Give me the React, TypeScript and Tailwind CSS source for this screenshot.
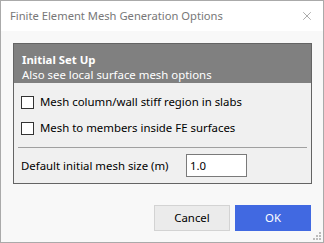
import { X } from 'lucide-react';

function CheckRow({ label }: { label: string }) {
  return (
    <label className="flex items-center h-[26px] pl-[7px]">
      <span className="w-[13px] h-[13px] border border-[#333333] bg-white shrink-0" />
      <span className="ml-[6px] text-[11.4px] text-black leading-none">{label}</span>
    </label>
  );
}

export default function App() {
  return (
    <div
      className="relative w-[324px] h-[243px] border border-[#aaaaaa] bg-[#f8f8f8] flex flex-col overflow-hidden"
      style={{ fontFamily: '"Noto Sans", "Open Sans", sans-serif' }}
    >
      <div className="h-[30px] bg-white flex items-center justify-between pl-[9px] pr-[9px] shrink-0">
        <span className="text-[11.2px] text-[#777777]">Finite Element Mesh Generation Options</span>
        <X className="w-[14px] h-[14px] text-[#888888]" strokeWidth={1.2} />
      </div>

      <div className="flex-1 flex flex-col px-[12px] pt-[12px]">
        <div className="w-[299px] border border-[#646464] bg-[#f0f0f0] flex flex-col">
          <div className="bg-[#808080] h-[39px] px-[8px] pt-[8px] text-white text-[11.4px] leading-[15px]">
            <div className="font-bold">Initial Set Up</div>
            <div>Also see local surface mesh options</div>
          </div>
          <div className="pt-[6px]">
            <CheckRow label="Mesh column/wall stiff region in slabs" />
            <CheckRow label="Mesh to members inside FE surfaces" />
          </div>
          <div className="mx-[4px] mt-[6px] h-px bg-[#a0a0a0]" />
          <div className="flex items-center h-[35px] pl-[7px]">
            <span className="text-[11.4px] text-black w-[165px]">Default initial mesh size (m)</span>
            <div className="w-[61px] h-[23px] border border-[#7a7a7a] bg-white flex items-center px-[3px] text-[11.4px] text-black">
              1.0
            </div>
          </div>
        </div>

        <div className="flex justify-end gap-[5px] mt-[21px]">
          <button className="w-[76px] h-[26px] bg-[#ebebeb] border border-[#d3d3d3] text-[11.4px] text-black">
            Cancel
          </button>
          <button className="w-[76px] h-[26px] bg-[#4169e1] text-[11.4px] text-white">OK</button>
        </div>
      </div>

      {/* resize grip */}
      <svg className="absolute right-[2px] bottom-[2px]" width="8" height="8" viewBox="0 0 8 8">
        <rect x="6" y="0" width="2" height="2" fill="#bcbcbc" />
        <rect x="3" y="3" width="2" height="2" fill="#bcbcbc" />
        <rect x="6" y="3" width="2" height="2" fill="#bcbcbc" />
        <rect x="0" y="6" width="2" height="2" fill="#bcbcbc" />
        <rect x="3" y="6" width="2" height="2" fill="#bcbcbc" />
        <rect x="6" y="6" width="2" height="2" fill="#bcbcbc" />
      </svg>
    </div>
  );
}
